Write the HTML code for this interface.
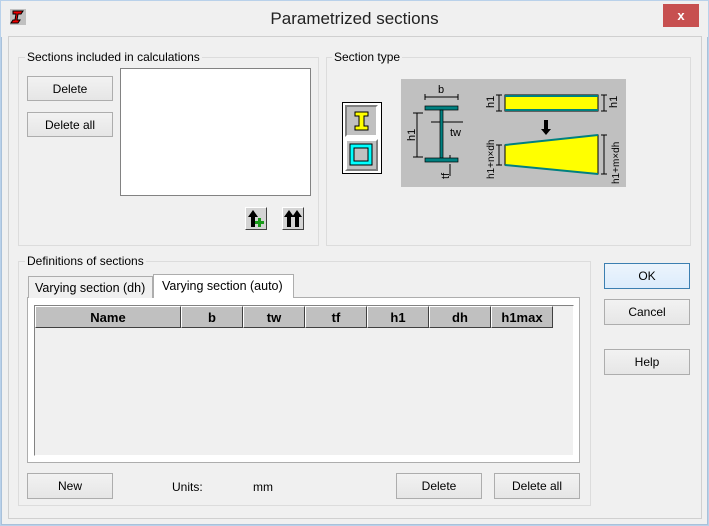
<!DOCTYPE html>
<html><head><meta charset="utf-8"><style>
*{box-sizing:border-box;margin:0;padding:0}
body{width:709px;height:526px;background:#b9d1ea;font-family:"Liberation Sans",sans-serif;font-size:12px;color:#000;position:relative;overflow:hidden}
.a{position:absolute}
.win{left:1px;top:1px;width:707px;height:524px;background:#f0f0f0;border:1px solid #a9c1da}
.title{left:1px;top:1px;width:707px;height:36px;background:#f0f0f0}
.client{left:8px;top:36px;width:694px;height:483px;background:#f0f0f0;border:1px solid #d0d0d0}
.grp{border:1px solid #dcdcdc}
.lbl{background:#f0f0f0;padding:0 2px;font-size:12px;line-height:14px}
.btn{border:1px solid #adadad;background:linear-gradient(#f2f2f2,#e6e6e6);text-align:center;font-size:12px;display:flex;align-items:center;justify-content:center}
.th{top:306px;height:22px;background:#c0c0c0;border:1px solid #fff;border-right-color:#404040;border-bottom-color:#404040;font-weight:bold;font-size:13px;display:flex;align-items:center;justify-content:center}
</style></head><body>
<div class="a win"></div>
<div class="a title"></div>
<svg class="a" style="left:10px;top:9px" width="16" height="16" viewBox="0 0 16 16"><rect width="16" height="16" fill="#c0c0c0"/><path d="M3 2h10l-2 3h-3l-1 6h3l-2 3H1l2-3h2l1-6H3z" fill="#e00" stroke="#000" stroke-width="1"/></svg>
<div class="a" style="left:0;top:9px;width:709px;text-align:center;font-size:17px;color:#222">Parametrized sections</div>
<div class="a" style="left:663px;top:4px;width:36px;height:23px;background:#c75050;color:#fff;font-weight:bold;font-size:13px;display:flex;align-items:center;justify-content:center">x</div>
<div class="a client"></div>

<div class="a grp" style="left:18px;top:57px;width:301px;height:189px"></div>
<div class="a lbl" style="left:25px;top:50px">Sections included in calculations</div>
<div class="a btn" style="left:27px;top:76px;width:86px;height:25px">Delete</div>
<div class="a btn" style="left:27px;top:112px;width:86px;height:25px">Delete all</div>
<div class="a" style="left:120px;top:68px;width:191px;height:128px;background:#fff;border:1px solid #828282"></div>
<div class="a" style="left:245px;top:207px;width:22px;height:23px;background:#d4d4d4;border:1px solid #fff;border-right-color:#404040;border-bottom-color:#404040"></div>
<svg class="a" style="left:245px;top:207px" width="22" height="23"><path d="M8 3l-5 7h3v10h4V10h3z" fill="#000"/><path d="M13 11h3v3h3v3h-3v3h-3v-3h-3v-3h3z" fill="#1a9a1a"/></svg>
<div class="a" style="left:282px;top:207px;width:22px;height:23px;background:#d4d4d4;border:1px solid #fff;border-right-color:#404040;border-bottom-color:#404040"></div>
<svg class="a" style="left:282px;top:207px" width="22" height="23"><path d="M7 3l-5 7h3v10h4V10h3zM15 3l-5 7h3v10h4V10h3z" fill="#000"/></svg>

<div class="a grp" style="left:326px;top:57px;width:365px;height:189px"></div>
<div class="a lbl" style="left:332px;top:50px">Section type</div>
<div class="a" style="left:342px;top:102px;width:40px;height:72px;background:#fff;border:1px solid #000"></div>
<div class="a" style="left:345px;top:105px;width:33px;height:32px;background:#c0c0c0;border:2px solid #808080;border-right-color:#fff;border-bottom-color:#fff"></div>
<svg class="a" style="left:345px;top:105px" width="33" height="32"><path d="M10 7h13v4h-4v10h4v4H10v-4h4V11h-4z" fill="#ff0" stroke="#000"/></svg>
<div class="a" style="left:345px;top:139px;width:33px;height:32px;background:#c0c0c0;border:2px solid #fff;border-right-color:#808080;border-bottom-color:#808080"></div>
<svg class="a" style="left:345px;top:139px" width="33" height="32"><rect x="5" y="5" width="22" height="21" fill="#0ff" stroke="#000"/><rect x="9" y="9" width="14" height="13" fill="#c0c0c0" stroke="#000"/></svg>

<svg class="a" style="left:401px;top:79px" width="225" height="108" viewBox="0 0 225 108" font-family="Liberation Sans" font-size="11">
<rect width="225" height="108" fill="#c0c0c0"/>
<g fill="#008080" stroke="#000" stroke-width=".7"><rect x="24" y="27" width="33" height="4"/><rect x="39" y="31" width="3" height="48"/><rect x="24" y="79" width="33" height="4"/></g>
<g stroke="#000" stroke-width="1" fill="none"><path d="M24 18h33M24 15v6M57 15v6M12 34h10M12 78h10M16 34v44M42 43h20M30 43h9M49 85v12M49 76v3"/></g>
<text x="37" y="14">b</text><text x="49" y="57">tw</text>
<text transform="translate(14,62) rotate(-90)">h1</text>
<text transform="translate(48,100) rotate(-90)">tf</text>
<rect x="104" y="16" width="93" height="16" fill="#ff0" stroke="#000"/>
<rect x="104" y="16" width="93" height="2" fill="#008080"/><rect x="104" y="30" width="93" height="2" fill="#008080"/>
<path d="M104 66L197 56V95L104 86Z" fill="#ff0" stroke="#000"/>
<path d="M104 66L197 56" stroke="#008080" stroke-width="2"/><path d="M104 86L197 95" stroke="#008080" stroke-width="2"/>
<path d="M143 41v9h-3l5 6 5-6h-3v-9z" fill="#000"/>
<g stroke="#000" fill="none"><path d="M98 16v16M95 16h6M95 32h6M203 16v16M200 16h6M200 32h6M98 66v20M95 66h6M95 86h6M203 56v39M200 56h6M200 95h6"/></g>
<text transform="translate(93,29) rotate(-90)">h1</text>
<text transform="translate(216,29) rotate(-90)">h1</text>
<text transform="translate(93,100) rotate(-90)" font-size="10">h1+n×dh</text>
<text transform="translate(218,105) rotate(-90)" font-size="10">h1+m×dh</text>
</svg>

<div class="a grp" style="left:18px;top:261px;width:573px;height:245px"></div>
<div class="a lbl" style="left:25px;top:254px">Definitions of sections</div>
<div class="a" style="left:27px;top:297px;width:553px;height:166px;background:#fff;border:1px solid #adadad"></div>
<div class="a" style="left:28px;top:276px;width:125px;height:22px;background:#f0f0f0;border:1px solid #adadad;border-bottom:none;padding:4px 0 0 6px;font-size:12.5px">Varying section (dh)</div>
<div class="a" style="left:153px;top:274px;width:141px;height:24px;background:#fff;border:1px solid #adadad;border-bottom:none;padding:4px 0 0 8px;font-size:12.5px">Varying section (auto)</div>
<div class="a" style="left:34px;top:305px;width:540px;height:151px;background:#f0f0f0;border:1px solid #828282;border-right-color:#fff;border-bottom-color:#fff"></div>
<div class="a th" style="left:35px;width:146px">Name</div>
<div class="a th" style="left:181px;width:62px">b</div>
<div class="a th" style="left:243px;width:62px">tw</div>
<div class="a th" style="left:305px;width:62px">tf</div>
<div class="a th" style="left:367px;width:62px">h1</div>
<div class="a th" style="left:429px;width:62px">dh</div>
<div class="a th" style="left:491px;width:62px">h1max</div>

<div class="a btn" style="left:27px;top:473px;width:86px;height:26px">New</div>
<div class="a" style="left:172px;top:480px">Units:</div>
<div class="a" style="left:253px;top:480px">mm</div>
<div class="a btn" style="left:396px;top:473px;width:86px;height:26px">Delete</div>
<div class="a btn" style="left:494px;top:473px;width:86px;height:26px">Delete all</div>

<div class="a btn" style="left:604px;top:263px;width:86px;height:26px;border:1px solid #3c7fb1;background:linear-gradient(#ecf4fc,#dcecfc)">OK</div>
<div class="a btn" style="left:604px;top:299px;width:86px;height:26px">Cancel</div>
<div class="a btn" style="left:604px;top:349px;width:86px;height:26px">Help</div>
</body></html>
